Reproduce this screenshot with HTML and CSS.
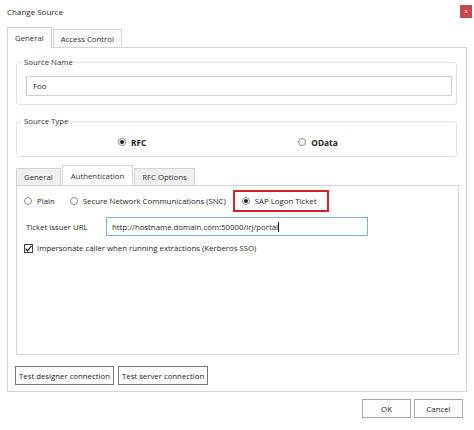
FILE: index.html
```html
<!DOCTYPE html>
<html>
<head>
<meta charset="utf-8">
<link rel="stylesheet" href="styles.css">
</head>
<body>
<div class="window">
  <div class="titlebar">
    <span class="title">Change Source</span>
    <span class="close">x</span>
  </div>
  <div class="tabs outer-tabs">
    <span class="tab active">General</span>
    <span class="tab">Access Control</span>
  </div>
  <div class="panel outer-panel">
    <fieldset class="group name-group">
      <legend>Source Name</legend>
      <div class="textbox name-box">Foo</div>
    </fieldset>
    <fieldset class="group type-group">
      <legend>Source Type</legend>
      <div class="type-row">
        <span class="option"><span class="radio checked"></span><b>RFC</b></span>
        <span class="option odata"><span class="radio"></span><b>OData</b></span>
      </div>
    </fieldset>
    <div class="tabs inner-tabs">
      <span class="tab itab">General</span>
      <span class="tab itab active">Authentication</span>
      <span class="tab itab">RFC Options</span>
    </div>
    <div class="panel inner-panel">
      <div class="auth-row">
        <span class="option"><span class="radio"></span>Plain</span>
        <span class="option snc"><span class="radio"></span>Secure Network Communications (SNC)</span>
        <span class="option highlight"><span class="radio checked"></span>SAP Logon Ticket</span>
      </div>
      <div class="url-row">
        <span class="url-label">Ticket issuer URL</span>
        <div class="textbox url-box">http://hostname.domain.com:50000/irj/portal<span class="caret"></span></div>
      </div>
      <div class="check-row">
        <span class="checkbox"><svg width="9" height="9" viewBox="0 0 9 9"><path d="M1.6 4.6 L3.6 6.8 L7.6 1.8" fill="none" stroke="#222" stroke-width="1.3"/></svg></span>
        <span>Impersonate caller when running extractions (Kerberos SSO)</span>
      </div>
    </div>
    <div class="test-row">
      <span class="btn">Test designer connection</span>
      <span class="btn">Test server connection</span>
    </div>
  </div>
  <div class="footer">
    <span class="btn dlg">OK</span>
    <span class="btn dlg">Cancel</span>
  </div>
</div>
</body>
</html>
```
FILE: styles.css
```css
html, body {
  margin: 0;
  padding: 0;
  background: #ffffff;
}
body {
  font-family: "Open Sans", "Noto Sans", sans-serif;
  font-size: 7.8px;
  color: #1f1f1f;
}
.window {
  width: 474px;
  height: 430px;
  display: flex;
  flex-direction: column;
  box-sizing: border-box;
}
.titlebar {
  height: 22px;
  display: flex;
  align-items: center;
  justify-content: space-between;
  padding: 0 2px 0 7px;
}
.title {
  font-size: 8px;
}
.close {
  width: 12px;
  height: 13px;
  background: #c8474d;
  color: #fff;
  font-size: 6px;
  display: flex;
  align-items: center;
  justify-content: center;
  line-height: 1;
}
.tabs {
  display: flex;
  align-items: flex-end;
}
.outer-tabs {
  margin-top: 5px;
  margin-left: 7px;
  height: 20px;
}
.tab {
  border: 1px solid #d4d4d4;
  border-bottom: none;
  background: #fbfbfb;
  height: 17px;
  display: flex;
  align-items: center;
  padding: 0 8px;
  box-sizing: border-box;
  margin-left: 1px;
  color: #333;
}
.outer-tabs .tab {
  height: 18px;
  padding: 0 7px;
}
.outer-tabs .tab.active {
  height: 21px;
  margin-bottom: -1px;
  background: #fff;
  position: relative;
  margin-left: 0;
  padding: 0 7px;
}
.panel {
  border: 1px solid #d4d4d4;
  background: #fff;
  box-sizing: border-box;
}
.outer-panel {
  margin: 0 7px 0 7px;
  height: 345px;
  padding: 8px 7px 0 8px;
  display: flex;
  flex-direction: column;
}
.group {
  margin: 0 2px 0 0;
  border: 1px solid #e2e2e2;
  border-radius: 3px;
  padding: 0 4px 8px 9px;
}
.group legend {
  padding: 0 3px;
  margin-left: -5px;
  color: #333;
  line-height: 12px;
}
.textbox {
  border: 1px solid #d0d0d0;
  height: 20px;
  box-sizing: border-box;
  display: flex;
  align-items: center;
  padding: 0 6px;
  background: #fff;
}
.name-box {
  margin-top: 8px;
}
.type-group {
  margin-top: 10px;
  padding-bottom: 8px;
}
.type-row {
  margin-top: 9px;
  display: flex;
  align-items: center;
  height: 12px;
  padding-left: 92px;
}
.type-row b {
  font-weight: 700;
  font-size: 8.3px;
}
.odata {
  margin-left: 152px;
}
.option {
  display: inline-flex;
  align-items: center;
  gap: 5px;
  white-space: nowrap;
}
.radio {
  width: 8px;
  height: 8px;
  border: 1px solid #8a8a8a;
  border-radius: 50%;
  box-sizing: border-box;
  background: #fff;
  display: inline-flex;
  align-items: center;
  justify-content: center;
}
.radio.checked::after {
  content: "";
  width: 4px;
  height: 4px;
  border-radius: 50%;
  background: #222;
}
.inner-tabs {
  margin-top: 8px;
  height: 20px;
}
.itab {
  background: #efefef;
  height: 17px;
  padding: 0 7px;
}
.itab.active {
  background: #fff;
  height: 21px;
  margin-bottom: -1px;
  padding: 0 8px;
}
.inner-tabs .itab:first-child {
  margin-left: 0;
}
.inner-panel {
  height: 170px;
  padding: 4px 7px 0 7px;
  display: flex;
  flex-direction: column;
}
.auth-row {
  display: flex;
  align-items: center;
  height: 22px;
}
.snc {
  margin-left: 15px;
}
.highlight {
  margin-left: 7px;
  border: 2px solid #d2232a;
  height: 22px;
  box-sizing: border-box;
  padding: 0 10px 0 7px;
}
.url-row {
  display: flex;
  align-items: center;
  margin-top: 5px;
}
.url-label {
  width: 80px;
  padding-left: 2px;
}
.url-box {
  width: 262px;
  height: 19px;
  border-color: #7fb0e0;
  padding: 0 5px;
}
.caret {
  display: inline-block;
  width: 1px;
  height: 10px;
  background: #111;
}
.check-row {
  display: flex;
  align-items: center;
  gap: 4px;
  margin-top: 7px;
}
.checkbox {
  width: 9px;
  height: 9px;
  border: 1px solid #444;
  box-sizing: border-box;
  display: inline-flex;
  align-items: center;
  justify-content: center;
  overflow: hidden;
}
.checkbox svg {
  flex: none;
}
.test-row {
  display: flex;
  gap: 4px;
  margin-top: 11px;
  margin-left: -1px;
}
.btn {
  border: 1px solid #777;
  height: 19px;
  box-sizing: border-box;
  display: inline-flex;
  align-items: center;
  justify-content: center;
  padding: 0 3px;
  background: #fdfdfd;
  white-space: nowrap;
}
.footer {
  display: flex;
  justify-content: flex-end;
  gap: 3px;
  margin-top: 7px;
  padding-right: 11px;
}
.btn.dlg {
  width: 49px;
  padding: 0;
  border-color: #a8a8a8;
}
```
